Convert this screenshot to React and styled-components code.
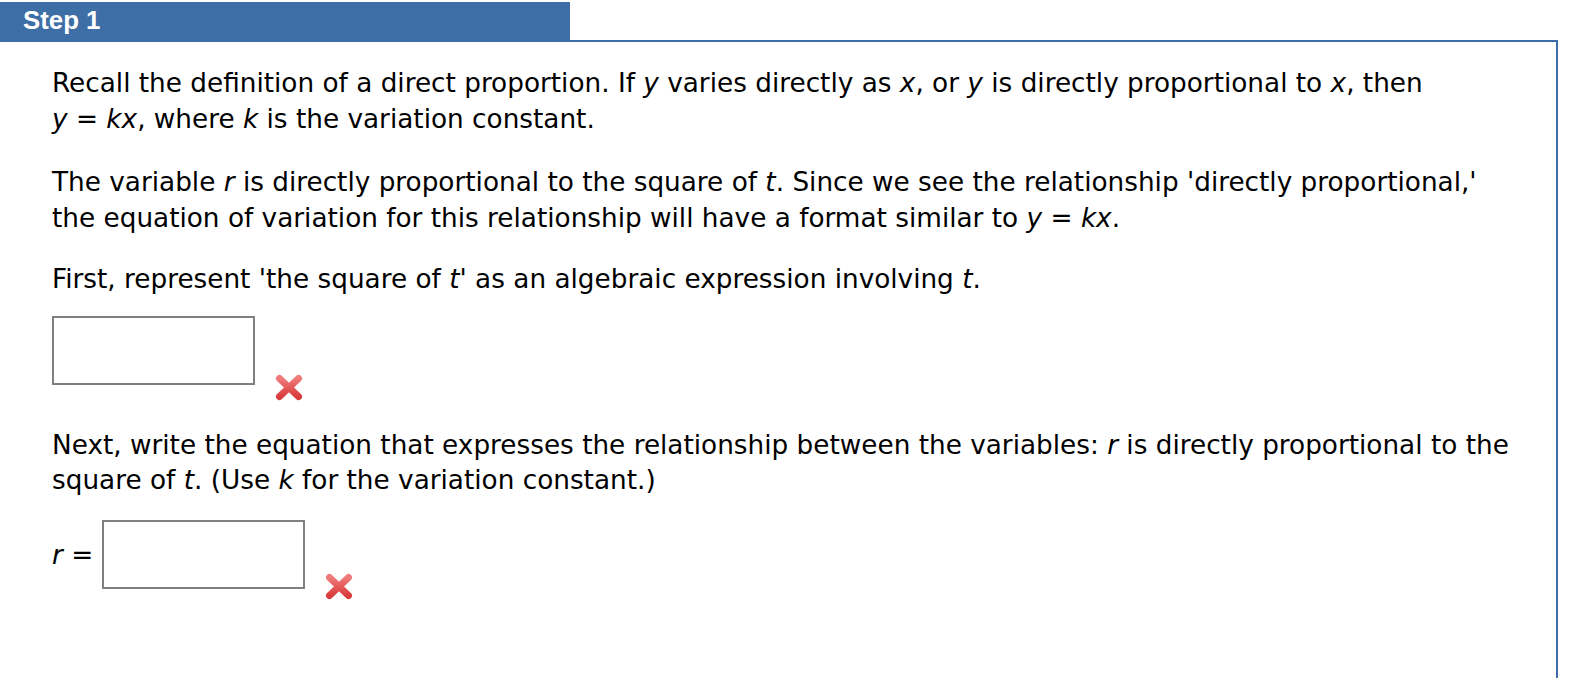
import React, { useId } from "react";
import styled, { createGlobalStyle } from "styled-components";

const GlobalStyle = createGlobalStyle`
  html, body {
    margin: 0;
    padding: 0;
    background: #ffffff;
  }
  body {
    font-family: "DejaVu Sans", Verdana, sans-serif;
    color: #000000;
  }
`;

const Page = styled.div`
  padding-top: 2px;
  width: 1558px;
`;

const StepTab = styled.div`
  width: 570px;
  height: 38px;
  background: #3d6ea6;
  color: #ffffff;
  font-family: "Liberation Sans", Arial, Helvetica, sans-serif;
  font-weight: 700;
  font-size: 25.8px;
  line-height: 36px;
  padding-left: 23px;
  box-sizing: border-box;
`;

const Frame = styled.section`
  border-top: 2px solid #3d6ea6;
  border-right: 2px solid #3d6ea6;
  min-height: 660px;
  padding: 24px 0 0 52px;
  box-sizing: border-box;
`;

const Para = styled.p`
  margin: ${(p) => p.$top || 0}px 0 0 0;
  font-size: 26.3px;
  line-height: 35.5px;
`;

const Line = styled.span`
  display: block;
  white-space: nowrap;
`;

const V = styled.i`
  font-style: italic;
`;

const AnswerRow = styled.div`
  display: flex;
  align-items: flex-end;
  margin-top: ${(p) => p.$top}px;
`;

const Label = styled.span`
  align-self: center;
  font-size: 26.3px;
  line-height: 35.5px;
  margin-right: 9px;
  padding-top: 3px;
  white-space: nowrap;
`;

const InputBox = styled.div`
  width: 203px;
  height: 69px;
  box-sizing: border-box;
  border: 2px solid #808080;
  background: #ffffff;
`;

const ErrorMark = styled.span`
  display: inline-flex;
  margin-left: 20px;
  margin-bottom: ${(p) => p.$drop}px;
`;

function Cross({ drop }) {
  const id = useId();
  return (
    <ErrorMark $drop={drop}>
      <svg width="28" height="27" viewBox="0 0 28 27" aria-label="incorrect">
        <defs>
          <linearGradient id={id} x1="0" y1="0" x2="0" y2="1">
            <stop offset="0" stopColor="#f17a7a" />
            <stop offset="1" stopColor="#d93c3c" />
          </linearGradient>
        </defs>
        <path
          d="M4.5 4.5 L23.5 22.5 M23.5 4.5 L4.5 22.5"
          stroke={`url(#${id})`}
          strokeWidth="7"
          strokeLinecap="round"
          fill="none"
        />
      </svg>
    </ErrorMark>
  );
}

export default function App() {
  return (
    <>
      <GlobalStyle />
      <Page>
        <StepTab>Step 1</StepTab>
        <Frame>
          <Para>
            <Line>
              Recall the definition of a direct proportion. If <V>y</V> varies
              directly as <V>x</V>, or <V>y</V> is directly proportional to{" "}
              <V>x</V>, then
            </Line>
            <Line>
              <V>y</V> = <V>kx</V>, where <V>k</V> is the variation constant.
            </Line>
          </Para>
          <Para $top={28}>
            <Line>
              The variable <V>r</V> is directly proportional to the square of{" "}
              <V>t</V>. Since we see the relationship 'directly proportional,'
            </Line>
            <Line>
              the equation of variation for this relationship will have a
              format similar to <V>y</V> = <V>kx</V>.
            </Line>
          </Para>
          <Para $top={26}>
            <Line>
              First, represent 'the square of <V>t</V>' as an algebraic
              expression involving <V>t</V>.
            </Line>
          </Para>
          <AnswerRow $top={18}>
            <InputBox />
            <Cross drop={-16} />
          </AnswerRow>
          <Para $top={43}>
            <Line>
              Next, write the equation that expresses the relationship between
              the variables: <V>r</V> is directly proportional to the
            </Line>
            <Line>
              square of <V>t</V>. (Use <V>k</V> for the variation constant.)
            </Line>
          </Para>
          <AnswerRow $top={21}>
            <Label>
              <V>r</V> =
            </Label>
            <InputBox />
            <Cross drop={-11} />
          </AnswerRow>
        </Frame>
      </Page>
    </>
  );
}
